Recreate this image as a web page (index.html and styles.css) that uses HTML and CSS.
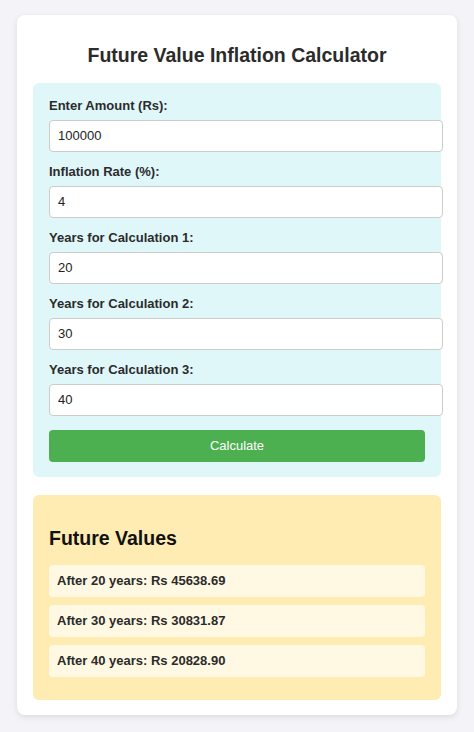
FILE: index.html
```html
<!DOCTYPE html>
<html lang="en">
<head>
    <meta charset="UTF-8">
    <meta name="viewport" content="width=device-width, initial-scale=1.0">
    <title>Future Value Inflation Calculator</title>
    <link rel="stylesheet" href="styles.css">
</head>
<body>
    <div class="container">
        <h1>Future Value Inflation Calculator</h1>
        <form id="calcForm" class="calc-form">
            <label for="amount">Enter Amount (Rs):</label>
            <input type="number" id="amount" value="100000">

            <label for="rate">Inflation Rate (%):</label>
            <input type="number" id="rate" value="4">

            <label for="years1">Years for Calculation 1:</label>
            <input type="number" id="years1" value="20">

            <label for="years2">Years for Calculation 2:</label>
            <input type="number" id="years2" value="30">

            <label for="years3">Years for Calculation 3:</label>
            <input type="number" id="years3" value="40">

            <button type="submit" class="btn-calc">Calculate</button>
        </form>

        <div class="results">
            <h2>Future Values</h2>
            <div class="result-item">After 20 years: Rs 45638.69</div>
            <div class="result-item">After 30 years: Rs 30831.87</div>
            <div class="result-item">After 40 years: Rs 20828.90</div>
        </div>
    </div>
</body>
</html>
```

FILE: styles.css
```css
body {
    font-family: "Liberation Sans", Arial, sans-serif;
    background-color: #f4f4f8;
    margin: 0;
    padding: 15px 17px;
}
.container {
    background-color: white;
    padding: 16px 16px 15px;
    border-radius: 8px;
    box-shadow: 0 2px 6px rgba(0, 0, 0, 0.1);
}
h1 {
    text-align: center;
    color: #2b2b2b;
    font-size: 19.5px;
    line-height: 23px;
    margin: 13px 0 16px;
}
.calc-form {
    background-color: #e0f7fa;
    padding: 15px 16px 15px;
    border-radius: 6px;
}
.calc-form label {
    display: block;
    font-size: 13px;
    line-height: 16px;
    font-weight: bold;
    color: #2b2b2b;
    margin-bottom: 6px;
}
.calc-form input {
    display: block;
    width: 100%;
    font-family: inherit;
    font-size: 13px;
    line-height: 16px;
    color: #222;
    padding: 7px 8px;
    border: 1px solid #ccc;
    border-radius: 4px;
    margin: 0 0 12px;
    background: white;
}
.btn-calc {
    display: block;
    width: 100%;
    font-family: inherit;
    font-size: 13px;
    line-height: 16px;
    padding: 8px;
    margin-top: 14px;
    border: none;
    border-radius: 4px;
    background-color: #4caf50;
    color: white;
    cursor: pointer;
}
.results {
    background-color: #ffecb3;
    padding: 16px 16px 15px;
    margin-top: 18px;
    border-radius: 6px;
}
.results h2 {
    font-size: 19.5px;
    line-height: 23px;
    color: #111;
    margin: 16px 0 15px;
}
.result-item {
    background-color: #fff9e3;
    font-size: 13px;
    line-height: 16px;
    font-weight: bold;
    color: #2b2b2b;
    padding: 8px;
    margin: 8px 0;
    border-radius: 4px;
}
```
